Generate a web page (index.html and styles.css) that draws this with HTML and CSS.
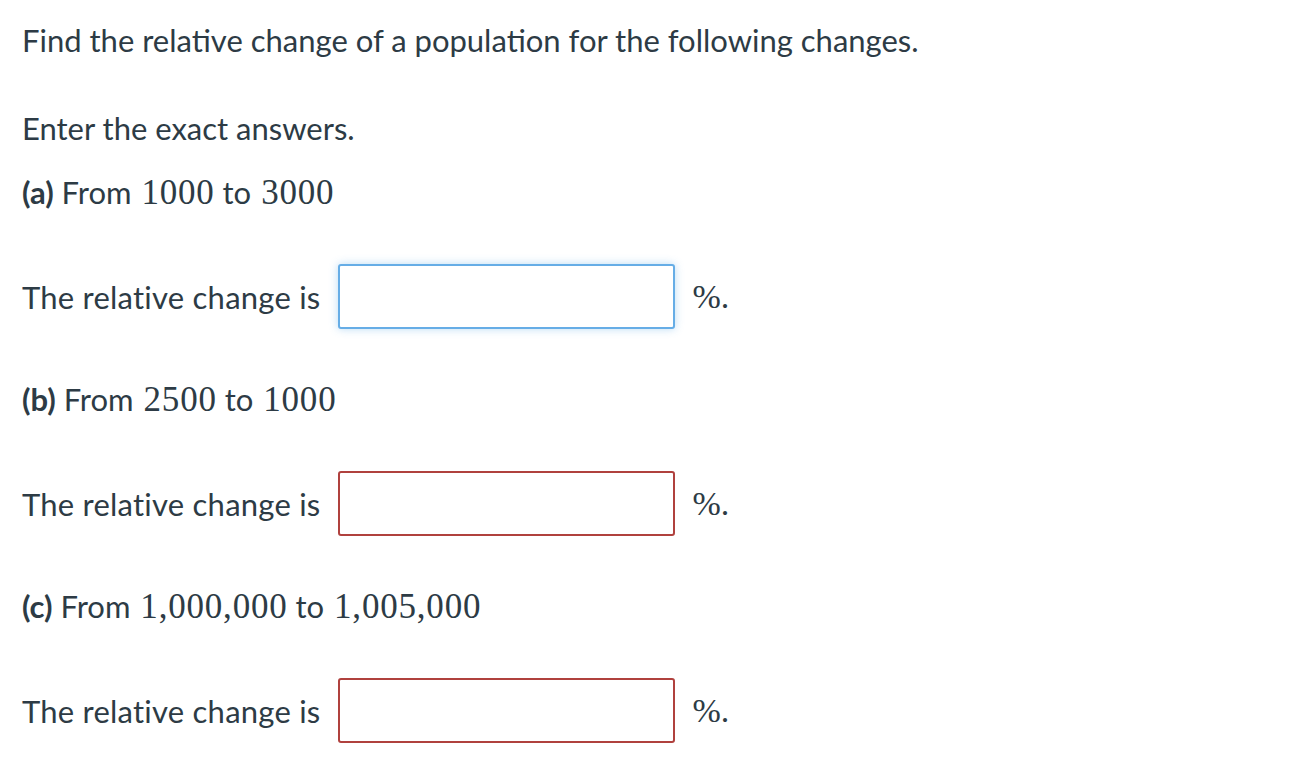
FILE: index.html
```html
<!DOCTYPE html>
<html lang="en">
<head>
<meta charset="utf-8">
<title>Relative change</title>
<link rel="stylesheet" href="styles.css">
</head>
<body>
<main class="page">
  <p class="title">Find the relative change of a population for the following changes.</p>
  <p class="instr">Enter the exact answers.</p>

  <section class="part">
    <p class="q"><b>(a)</b> From <span class="m">1000</span> to <span class="m">3000</span></p>
    <div class="row">
      <span class="label">The relative change is</span>
      <span class="box box-focus"></span>
      <span class="m pct">%.</span>
    </div>
  </section>

  <section class="part">
    <p class="q"><b>(b)</b> From <span class="m">2500</span> to <span class="m">1000</span></p>
    <div class="row">
      <span class="label">The relative change is</span>
      <span class="box box-error"></span>
      <span class="m pct">%.</span>
    </div>
  </section>

  <section class="part">
    <p class="q"><b>(c)</b> From <span class="m">1,000,000</span> to <span class="m">1,005,000</span></p>
    <div class="row">
      <span class="label">The relative change is</span>
      <span class="box box-error"></span>
      <span class="m pct">%.</span>
    </div>
  </section>
</main>
</body>
</html>
```

FILE: styles.css
```css
html, body {
  margin: 0;
  padding: 0;
  background: #ffffff;
}

body {
  font-family: Lato, "Noto Sans", sans-serif;
  color: #2d3b45;
  font-size: 31px;
}

.page {
  padding: 20px 22px 0 22px;
  display: flex;
  flex-direction: column;
}

p {
  margin: 0;
  line-height: 40px;
}

.title {
  margin-bottom: 48px;
}

.instr {
  margin-bottom: 24px;
}

.q b {
  font-weight: 700;
}

.m {
  font-family: "Liberation Serif", "DejaVu Serif", serif;
  font-size: 35px;
  line-height: 40px;
  letter-spacing: 0.8px;
  margin-left: 2px;
}

.part {
  display: flex;
  flex-direction: column;
}

.q {
  margin-bottom: 51px;
}

.row {
  display: flex;
  align-items: center;
  height: 65px;
  margin-bottom: 50px;
}

.label {
  line-height: 40px;
  letter-spacing: 0.23px;
}

.box {
  box-sizing: border-box;
  width: 337px;
  height: 65px;
  margin-left: 17px;
  border: 2px solid #b0413e;
  border-radius: 3px;
  background: #ffffff;
}

.box-focus {
  border-color: #66ade6;
  box-shadow: 0 0 9px rgba(102, 175, 233, 0.45);
}

.pct {
  margin-left: 18px;
  font-size: 34px;
  letter-spacing: 0;
}
```
